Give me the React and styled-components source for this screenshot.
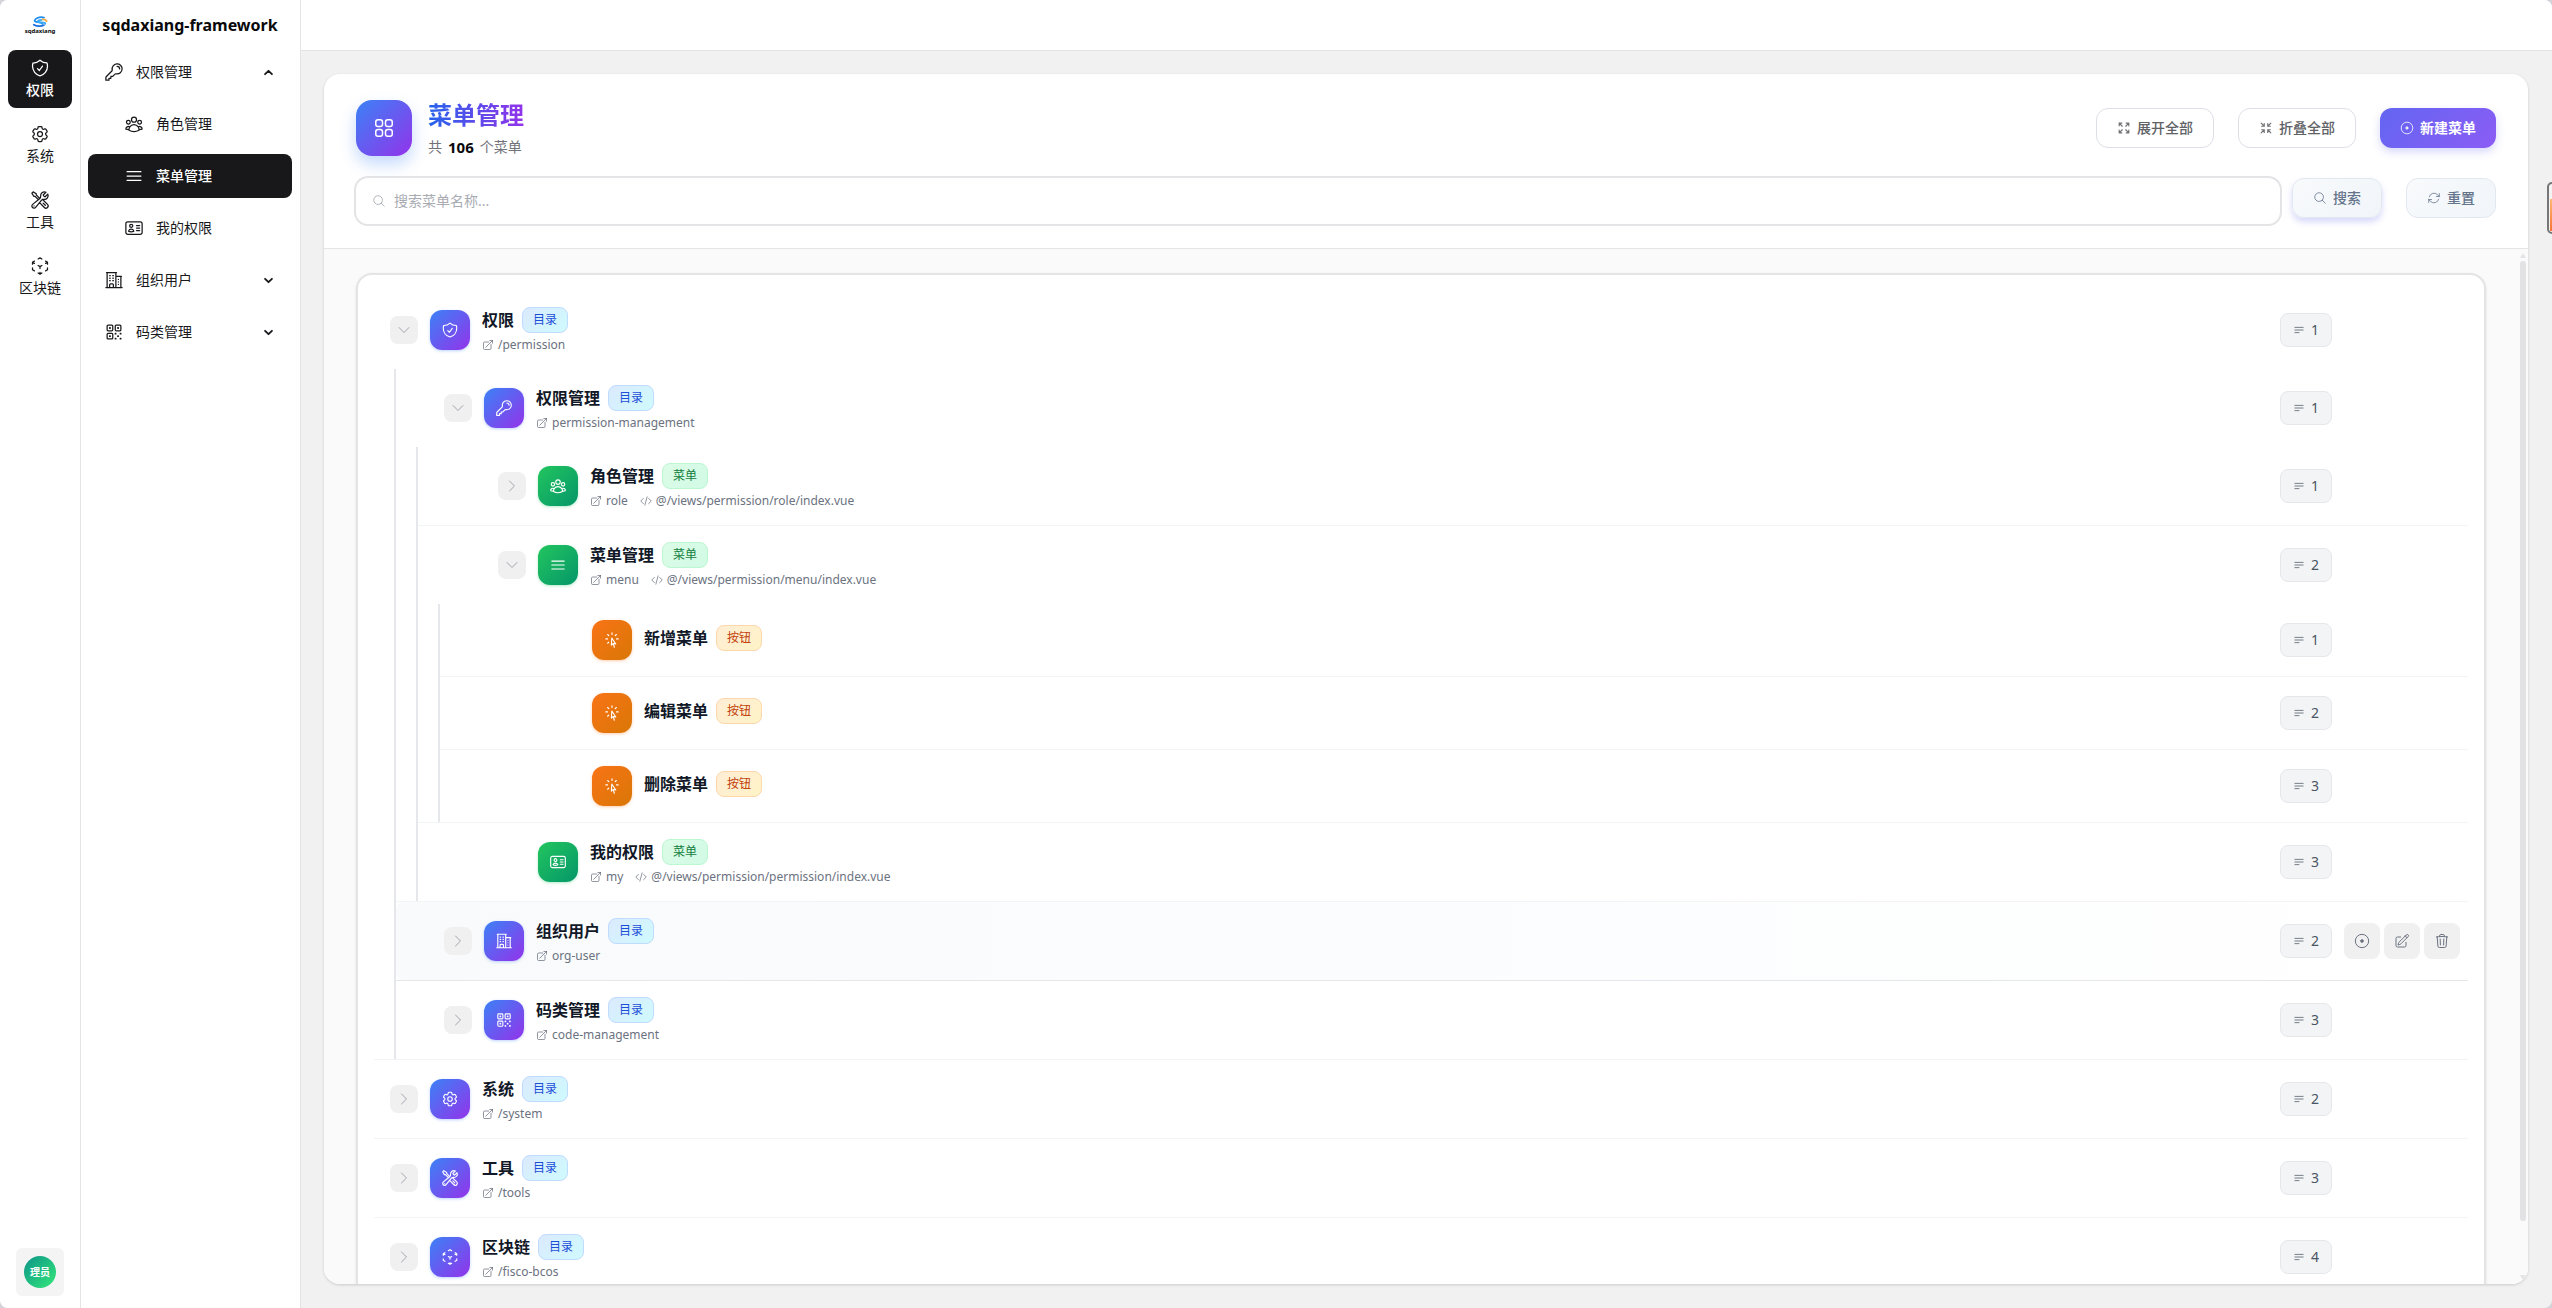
import React from 'react';
import styled, { createGlobalStyle, css } from 'styled-components';
import {
  HiOutlineArrowPath,
  HiOutlineArrowsPointingIn,
  HiOutlineArrowsPointingOut,
  HiOutlineArrowTopRightOnSquare,
  HiOutlineBars3,
  HiOutlineBars3BottomLeft,
  HiOutlineBuildingOffice2,
  HiOutlineChevronDown,
  HiOutlineChevronRight,
  HiOutlineChevronUp,
  HiOutlineCodeBracket,
  HiOutlineCog6Tooth,
  HiOutlineCubeTransparent,
  HiOutlineCursorArrowRays,
  HiOutlineIdentification,
  HiOutlineKey,
  HiOutlineMagnifyingGlass,
  HiOutlinePencilSquare,
  HiOutlineQrCode,
  HiOutlineShieldCheck,
  HiOutlineSquares2X2,
  HiOutlineTrash,
  HiOutlineUserGroup,
  HiOutlineWrenchScrewdriver,
} from 'react-icons/hi2';

const GlobalStyle = createGlobalStyle`
  * {
    box-sizing: border-box;
  }

  body {
    margin: 0;
    background: #d4d4d8;
    color: #09090b;
    font-family: 'Noto Sans', 'Noto Sans CJK SC', sans-serif;
    font-size: 14px;
    line-height: 20px;
  }

  button,
  input {
    font: inherit;
  }

  button {
    cursor: pointer;
  }

  a {
    color: inherit;
    text-decoration: none;
  }

  svg {
    flex-shrink: 0;
  }
`;

const Shell = styled.div`
  position: relative;
  display: flex;
  height: 100vh;
  background: #f1f1f1;
  border-radius: 8px;
  overflow: hidden;
`;

/* ---------- sidebars ---------- */

const Rail = styled.nav`
  flex: 0 0 80px;
  display: flex;
  flex-direction: column;
  align-items: center;
  background: #fff;
  padding-bottom: 12px;
`;

const Logo = styled.a`
  display: flex;
  flex-direction: column;
  align-items: center;
  justify-content: center;
  height: 50px;
  font-size: 6px;
  font-weight: 700;
  line-height: 7px;
`;

const RailList = styled.div`
  display: flex;
  flex-direction: column;
  gap: 8px;
  width: 64px;
`;

const RailItem = styled.a`
  display: flex;
  flex-direction: column;
  align-items: center;
  gap: 2px;
  height: 58px;
  padding-top: 8px;
  border-radius: 8px;
  background: ${(props) => (props.$active ? '#18181b' : 'transparent')};
  color: ${(props) => (props.$active ? '#fff' : '#18181b')};
  font-weight: ${(props) => (props.$active ? 500 : 400)};

  svg {
    width: 20px;
    height: 20px;
  }
`;

const UserButton = styled.button`
  display: flex;
  align-items: center;
  justify-content: center;
  width: 48px;
  height: 48px;
  margin-top: auto;
  padding: 0;
  border: 0;
  border-radius: 6px;
  background: #f4f4f5;
`;

const Avatar = styled.span`
  width: 32px;
  border-radius: 50%;
  background: linear-gradient(135deg, #0d9488, #34e87a);
  color: #fff;
  font-size: 10px;
  font-weight: 700;
  line-height: 32px;
`;

const Side = styled.aside`
  flex: 0 0 220px;
  background: #fff;
  box-shadow: inset 1px 0 0 #e4e4e7, 1px 0 0 #e4e4e7;
`;

const Brand = styled.h1`
  margin: 0;
  font-size: 16px;
  font-weight: 700;
  line-height: 50px;
  text-align: center;
`;

const SideMenu = styled.nav`
  display: flex;
  flex-direction: column;
  gap: 8px;
  padding: 0 8px;
`;

const SideItem = styled.a`
  display: flex;
  align-items: center;
  gap: 12px;
  height: 44px;
  padding: 0 18px 0 ${(props) => (props.$nested ? 36 : 16)}px;
  border-radius: 8px;
  background: ${(props) => (props.$active ? '#18181b' : 'transparent')};
  color: ${(props) => (props.$active ? '#fff' : '#18181b')};
  font-weight: ${(props) => (props.$active ? 500 : 400)};

  svg {
    width: 20px;
    height: 20px;
  }

  svg:nth-child(3) {
    width: 11px;
    height: 11px;
    margin-left: auto;
    stroke-width: 4;
  }
`;

/* ---------- page ---------- */

const Main = styled.div`
  flex: 1;
  min-width: 0;
  display: flex;
  flex-direction: column;
`;

const TopBar = styled.header`
  flex: 0 0 50px;
  background: #fff;
  box-shadow: inset 1px 0 0 #e4e4e7, 0 1px 0 #e4e4e7;
`;

const Page = styled.main`
  flex: 1;
  min-height: 0;
  display: flex;
  padding: 24px;
`;

const Panel = styled.section`
  flex: 1;
  min-width: 0;
  display: flex;
  flex-direction: column;
  background: #fff;
  border-radius: 16px;
  box-shadow: 0 1px 3px rgba(0, 0, 0, 0.16);
  overflow: hidden;
`;

const PanelHeader = styled.div`
  display: flex;
  flex-direction: column;
  gap: 22px;
  padding: 26px 32px 24px;
  border-bottom: 1px solid #e4e4e7;
`;

const TitleRow = styled.div`
  display: flex;
  align-items: center;
  gap: 16px;
`;

const TitleIcon = styled.div`
  display: flex;
  align-items: center;
  justify-content: center;
  width: 56px;
  height: 56px;
  border-radius: 16px;
  background: linear-gradient(135deg, #3b82f6, #9333ea);
  box-shadow: 0 8px 16px rgba(59, 130, 246, 0.3);
  color: #fff;

  svg {
    width: 24px;
    height: 24px;
  }
`;

const TitleText = styled.div`
  display: flex;
  flex-direction: column;
  gap: 8px;
`;

const Title = styled.h2`
  margin: 0;
  background: linear-gradient(90deg, #2563eb, #9333ea);
  background-clip: text;
  -webkit-background-clip: text;
  color: transparent;
  font-size: 24px;
  font-weight: 700;
  line-height: 30px;
`;

const Summary = styled.p`
  display: flex;
  gap: 6px;
  margin: 0;
  color: #71717a;
  line-height: 18px;

  strong {
    color: #09090b;
    font-size: 15px;
  }
`;

const Actions = styled.div`
  display: flex;
  gap: 24px;
  margin-left: auto;
`;

const variants = {
  plain: css`
    border: 1px solid #dcdfe6;
    background: #fff;
    color: #606266;

    svg {
      stroke-width: 2;
    }
  `,
  primary: css`
    border: 0;
    background: linear-gradient(135deg, #6366f1, #8b5cf6);
    box-shadow: 0 4px 8px rgba(99, 102, 241, 0.25);
    color: #fff;
    font-weight: 700;
  `,
  soft: css`
    border: 1px solid #e2e8f0;
    background: linear-gradient(135deg, #f8fafc, #f1f5f9);
    color: #64748b;
  `,
};

const Button = styled.button`
  display: flex;
  align-items: center;
  gap: 6px;
  height: 40px;
  padding: 0 20px;
  border-radius: 12px;
  font-weight: 500;
  ${(props) => variants[props.$variant]}
  ${(props) => props.$raised && 'box-shadow: 0 4px 6px rgba(99, 102, 241, 0.25);'}

  svg {
    width: 14px;
    height: 14px;
    opacity: 0.9;
  }
`;

const SearchRow = styled.form`
  display: flex;
  align-items: flex-start;
  gap: 12px;
`;

const SearchBox = styled.label`
  flex: 1;
  display: flex;
  align-items: center;
  gap: 8px;
  height: 46px;
  padding: 0 16px;
  border-radius: 12px;
  box-shadow: 0 0 0 2px #e4e4e7;
  color: #a8abb2;

  svg {
    width: 14px;
    height: 14px;
  }

  input {
    flex: 1;
    padding: 0;
    border: 0;
    outline: 0;
    background: transparent;
    color: #18181b;
  }

  input::placeholder {
    color: #a8abb2;
  }
`;

const PanelBody = styled.div`
  flex: 1;
  min-height: 0;
  display: flex;
  background: #fafafa;
`;

const ScrollArea = styled.div`
  flex: 1;
  overflow-y: auto;
  scrollbar-width: none;
  padding: 24px 32px;
`;

const ScrollBar = styled.div`
  flex: 0 0 10px;
  display: flex;
  flex-direction: column;
  align-items: center;
  justify-content: space-between;
  padding: 4px 0;
  color: #e4e4e7;

  svg {
    width: 6px;
    height: 5px;
  }
`;

const ScrollTrack = styled.div`
  flex: 1;
  width: 6px;
  padding: 3px 0;
`;

const ScrollThumb = styled.div`
  height: 95%;
  border-radius: 3px;
  background: #e2e2e5;
`;

/* ---------- tree ---------- */

const Tree = styled.div`
  padding: 16px;
  border: 2px solid #e4e4e7;
  border-radius: 16px;
  background: #fff;
  box-shadow: 0 1px 3px rgba(0, 0, 0, 0.1);
`;

const Node = styled.div`
  border-bottom: 1px solid ${(props) => (props.$hovered ? '#e5e7eb' : '#f3f4f6')};

  &:last-child {
    border-bottom: 0;
  }
`;

const Children = styled.div`
  margin-left: 20px;
  border-left: 2px solid #e5e7eb;
`;

const Row = styled.div`
  display: flex;
  align-items: center;
  gap: 12px;
  padding: 16px 8px 16px ${(props) => 16 + props.$level * 32}px;
  border-radius: 8px;
  ${(props) => props.$hovered && 'background: linear-gradient(90deg, #f8fafc, #fff);'}
`;

const Toggle = styled.button`
  display: flex;
  align-items: center;
  justify-content: center;
  width: 28px;
  height: 28px;
  padding: 0;
  border: 0;
  border-radius: 8px;
  background: #f0f0f0;
  color: #a1a5ae;

  svg {
    width: 16px;
    height: 16px;
  }
`;

const ToggleSpace = styled.span`
  width: 28px;
`;

const palette = {
  dir: {
    label: '目录',
    icon: 'linear-gradient(135deg, #3b82f6, #9333ea)',
    shadow: 'rgba(59, 130, 246, 0.35)',
    badge: 'linear-gradient(135deg, #dbeafe, #cffafe)',
    border: '#bfdbfe',
    text: '#1d4ed8',
  },
  menu: {
    label: '菜单',
    icon: 'linear-gradient(135deg, #22c55e, #059669)',
    shadow: 'rgba(34, 197, 94, 0.35)',
    badge: 'linear-gradient(135deg, #dcfce7, #d1fae5)',
    border: '#bbf7d0',
    text: '#15803d',
  },
  button: {
    label: '按钮',
    icon: 'linear-gradient(135deg, #f97316, #d97706)',
    shadow: 'rgba(249, 115, 22, 0.35)',
    badge: 'linear-gradient(135deg, #ffedd5, #fef3c7)',
    border: '#fed7aa',
    text: '#c2410c',
  },
};

const NodeIcon = styled.div`
  display: flex;
  align-items: center;
  justify-content: center;
  width: 40px;
  height: 40px;
  border-radius: 12px;
  background: ${(props) => palette[props.$type].icon};
  box-shadow: 0 1px 3px ${(props) => palette[props.$type].shadow};
  color: #fff;

  svg {
    width: 18px;
    height: 18px;
  }
`;

const NodeInfo = styled.div`
  flex: 1;
  min-width: 0;
`;

const NameLine = styled.div`
  display: flex;
  align-items: center;
  gap: 8px;
  height: 26px;
  margin-bottom: 4px;
`;

const Name = styled.span`
  color: #111827;
  font-size: 16px;
  font-weight: 600;
  line-height: 24px;
`;

const Badge = styled.span`
  padding: 0 10px;
  border: 1px solid ${(props) => palette[props.$type].border};
  border-radius: 8px;
  background: ${(props) => palette[props.$type].badge};
  color: ${(props) => palette[props.$type].text};
  font-size: 12px;
  line-height: 24px;
`;

const PathLine = styled.div`
  display: flex;
  gap: 12px;
  color: #6b7280;
  font-size: 12px;
  line-height: 16px;

  span {
    display: flex;
    align-items: center;
    gap: 4px;
  }

  svg {
    width: 12px;
    height: 12px;
  }
`;

const Order = styled.span`
  display: flex;
  align-items: center;
  justify-content: center;
  gap: 6px;
  width: 52px;
  height: 34px;
  border: 1px solid #e5e7eb;
  border-radius: 8px;
  background: #f3f4f6;
  color: #4b5563;

  svg {
    width: 12px;
    height: 12px;
  }
`;

const RowActions = styled.div`
  display: flex;
  gap: 4px;
  visibility: ${(props) => (props.$visible ? 'visible' : 'hidden')};
`;

const IconButton = styled.button`
  display: flex;
  align-items: center;
  justify-content: center;
  width: 36px;
  height: 36px;
  padding: 0;
  border: 0;
  border-radius: 8px;
  background: #f0f0f0;
  color: #6b7280;

  svg {
    width: 16px;
    height: 16px;
  }
`;

/* floating handle docked to the window edge */
const EdgeHandle = styled.div`
  position: absolute;
  top: 182px;
  right: -45px;
  width: 50px;
  height: 52px;
  padding: 15px 0 0 1px;
  border: 2px solid #777;
  border-radius: 5px;
  background: #f4f4f5;

  &::before {
    content: '';
    display: block;
    height: 32px;
    background: linear-gradient(#fdba74, #f97332);
  }
`;

const LogoMark = () => (
  <svg width="16" height="12" viewBox="0 0 36 26" fill="none" strokeLinecap="round" strokeWidth="4">
    <path d="M27 3C17 0 7 5 6 10c0 5 15 1 17 7" stroke="#1d8cf0" />
    <path d="M22 8C15 8 13 10 13 12c2 4 17 0 17 5" stroke="#39a9f5" />
    <path d="M24 7c5 0 8 2 9 4" stroke="#f8a93a" />
    <path d="M4 19c8 5 18 4 23 1" stroke="#1d6fe0" />
  </svg>
);

const CircleDot = () => (
  <svg viewBox="0 0 24 24" fill="none" stroke="currentColor" strokeWidth="1.5">
    <circle cx="12" cy="12" r="10" />
    <circle cx="12" cy="12" r="2" fill="currentColor" />
  </svg>
);

const railItems = [
  { label: '权限', Icon: HiOutlineShieldCheck, active: true },
  { label: '系统', Icon: HiOutlineCog6Tooth },
  { label: '工具', Icon: HiOutlineWrenchScrewdriver },
  { label: '区块链', Icon: HiOutlineCubeTransparent },
];

const sideItems = [
  { label: '权限管理', Icon: HiOutlineKey, Arrow: HiOutlineChevronUp },
  { label: '角色管理', Icon: HiOutlineUserGroup, nested: true },
  { label: '菜单管理', Icon: HiOutlineBars3, nested: true, active: true },
  { label: '我的权限', Icon: HiOutlineIdentification, nested: true },
  { label: '组织用户', Icon: HiOutlineBuildingOffice2, Arrow: HiOutlineChevronDown },
  { label: '码类管理', Icon: HiOutlineQrCode, Arrow: HiOutlineChevronDown },
];

const menus = [
  {
    name: '权限', type: 'dir', path: '/permission', order: 1, Icon: HiOutlineShieldCheck,
    children: [
      {
        name: '权限管理', type: 'dir', path: 'permission-management', order: 1, Icon: HiOutlineKey,
        children: [
          { name: '角色管理', type: 'menu', path: 'role', view: '@/views/permission/role/index.vue', order: 1, Icon: HiOutlineUserGroup },
          {
            name: '菜单管理', type: 'menu', path: 'menu', view: '@/views/permission/menu/index.vue', order: 2, Icon: HiOutlineBars3,
            children: [
              { name: '新增菜单', type: 'button', order: 1, Icon: HiOutlineCursorArrowRays },
              { name: '编辑菜单', type: 'button', order: 2, Icon: HiOutlineCursorArrowRays },
              { name: '删除菜单', type: 'button', order: 3, Icon: HiOutlineCursorArrowRays },
            ],
          },
          { name: '我的权限', type: 'menu', path: 'my', view: '@/views/permission/permission/index.vue', order: 3, Icon: HiOutlineIdentification, leaf: true },
        ],
      },
      { name: '组织用户', type: 'dir', path: 'org-user', order: 2, Icon: HiOutlineBuildingOffice2, hovered: true },
      { name: '码类管理', type: 'dir', path: 'code-management', order: 3, Icon: HiOutlineQrCode },
    ],
  },
  { name: '系统', type: 'dir', path: '/system', order: 2, Icon: HiOutlineCog6Tooth },
  { name: '工具', type: 'dir', path: '/tools', order: 3, Icon: HiOutlineWrenchScrewdriver },
  { name: '区块链', type: 'dir', path: '/fisco-bcos', order: 4, Icon: HiOutlineCubeTransparent },
];

const MenuNode = ({ node, level = 0 }) => {
  const { name, type, path, view, order, Icon, children, hovered, leaf } = node;
  const hasToggle = type !== 'button' && !leaf;

  return (
    <Node $hovered={hovered}>
      <Row $level={level} $hovered={hovered}>
        {hasToggle ? (
          <Toggle type="button" aria-label={`${children ? '折叠' : '展开'}${name}`}>
            {children ? <HiOutlineChevronDown /> : <HiOutlineChevronRight />}
          </Toggle>
        ) : (
          <ToggleSpace />
        )}
        <NodeIcon $type={type}><Icon /></NodeIcon>
        <NodeInfo>
          <NameLine>
            <Name>{name}</Name>
            <Badge $type={type}>{palette[type].label}</Badge>
          </NameLine>
          {path && (
            <PathLine>
              <span><HiOutlineArrowTopRightOnSquare />{path}</span>
              {view && <span><HiOutlineCodeBracket />{view}</span>}
            </PathLine>
          )}
        </NodeInfo>
        <Order><HiOutlineBars3BottomLeft />{order}</Order>
        <RowActions $visible={hovered}>
          <IconButton type="button" aria-label="新增"><CircleDot /></IconButton>
          <IconButton type="button" aria-label="编辑"><HiOutlinePencilSquare /></IconButton>
          <IconButton type="button" aria-label="删除"><HiOutlineTrash /></IconButton>
        </RowActions>
      </Row>
      {children && (
        <Children>
          {children.map((child) => (
            <MenuNode key={child.name} node={child} level={level + 1} />
          ))}
        </Children>
      )}
    </Node>
  );
};

const App = () => {
  return (
    <>
      <GlobalStyle />
      <Shell>
        <Rail>
          <Logo href="#">
            <LogoMark />
            sqdaxiang
          </Logo>
          <RailList>
            {railItems.map(({ label, Icon, active }) => (
              <RailItem key={label} href="#" $active={active}>
                <Icon />
                {label}
              </RailItem>
            ))}
          </RailList>
          <UserButton type="button"><Avatar>理员</Avatar></UserButton>
        </Rail>

        <Side>
          <Brand>sqdaxiang-framework</Brand>
          <SideMenu>
            {sideItems.map(({ label, Icon, Arrow, nested, active }) => (
              <SideItem key={label} href="#" $nested={nested} $active={active}>
                <Icon />
                <span>{label}</span>
                {Arrow && <Arrow />}
              </SideItem>
            ))}
          </SideMenu>
        </Side>

        <Main>
          <TopBar />
          <Page>
            <Panel>
              <PanelHeader>
                <TitleRow>
                  <TitleIcon><HiOutlineSquares2X2 /></TitleIcon>
                  <TitleText>
                    <Title>菜单管理</Title>
                    <Summary>共 <strong>106</strong> 个菜单</Summary>
                  </TitleText>
                  <Actions>
                    <Button type="button" $variant="plain"><HiOutlineArrowsPointingOut />展开全部</Button>
                    <Button type="button" $variant="plain"><HiOutlineArrowsPointingIn />折叠全部</Button>
                    <Button type="button" $variant="primary"><CircleDot />新建菜单</Button>
                  </Actions>
                </TitleRow>
                <SearchRow>
                  <SearchBox>
                    <HiOutlineMagnifyingGlass />
                    <input type="text" placeholder="搜索菜单名称..." aria-label="搜索菜单名称" />
                  </SearchBox>
                  <Actions>
                    <Button type="button" $variant="soft" $raised><HiOutlineMagnifyingGlass />搜索</Button>
                    <Button type="button" $variant="soft"><HiOutlineArrowPath />重置</Button>
                  </Actions>
                </SearchRow>
              </PanelHeader>
              <PanelBody>
                <ScrollArea>
                  <Tree>
                    {menus.map((node) => (
                      <MenuNode key={node.name} node={node} />
                    ))}
                  </Tree>
                </ScrollArea>
                <ScrollBar aria-hidden="true">
                  <svg viewBox="0 0 6 5"><path d="M3 0l3 5H0z" fill="currentColor" /></svg>
                  <ScrollTrack><ScrollThumb /></ScrollTrack>
                  <svg viewBox="0 0 6 5"><path d="M0 0h6L3 5z" fill="currentColor" /></svg>
                </ScrollBar>
              </PanelBody>
            </Panel>
          </Page>
        </Main>
        <EdgeHandle />
      </Shell>
    </>
  );
};

export default App;
